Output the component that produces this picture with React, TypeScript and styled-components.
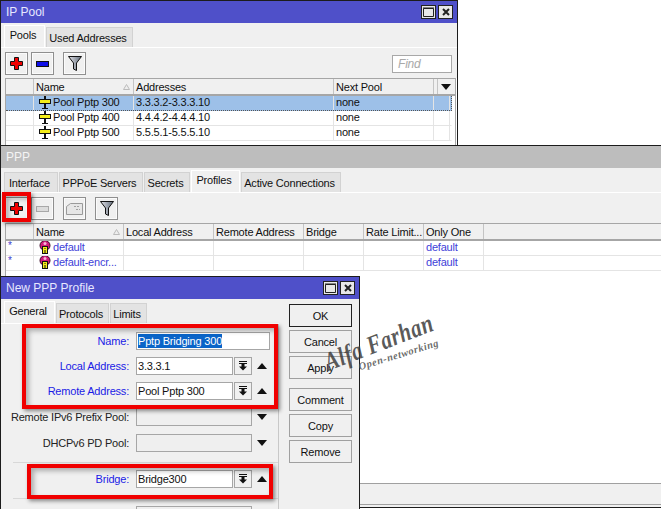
import React from 'react';
import styled, { createGlobalStyle } from 'styled-components';

const GlobalStyle = createGlobalStyle`
  html, body {
    margin: 0;
    padding: 0;
    background: #fff;
  }
  body {
    font-family: "Liberation Sans", Arial, sans-serif;
    font-size: 11px;
    letter-spacing: -0.2px;
    color: #111;
  }
`;

const Desktop = styled.div`
  position: relative;
  width: 661px;
  height: 509px;
  overflow: hidden;
  background: #fff;
`;

const Win = styled.div<{ $x: number; $y: number; $w: number; $h: number }>`
  position: absolute;
  left: ${(p) => p.$x}px;
  top: ${(p) => p.$y}px;
  width: ${(p) => p.$w}px;
  height: ${(p) => p.$h}px;
  box-sizing: border-box;
  display: flex;
  flex-direction: column;
  background: #f0f0f0;
  border: 1px solid #1c1c1c;
`;

const TitleBar = styled.div<{ $active?: boolean }>`
  flex: none;
  height: 22px;
  display: flex;
  align-items: center;
  justify-content: space-between;
  padding: 0 4px 0 5px;
  background: ${(p) => (p.$active ? '#4f50c9' : '#bdbdbd')};
  color: ${(p) => (p.$active ? '#e8e8ff' : '#f4f4f4')};
  font-size: 12px;
  letter-spacing: 0;
`;

const TitleButtons = styled.div`
  display: flex;
  gap: 2px;
`;

const TitleButton = styled.div`
  width: 15px;
  height: 14px;
  display: flex;
  align-items: center;
  justify-content: center;
  box-sizing: border-box;
  background: #e8e8e8;
  border: 1px solid #222;
`;

const TabBar = styled.div`
  flex: none;
  height: 24px;
  display: flex;
  align-items: flex-end;
  gap: 1px;
  padding-left: 3px;
  border-bottom: 1px solid #fff;
`;

const Tab = styled.div<{ $w: number; $active?: boolean }>`
  width: ${(p) => p.$w}px;
  height: ${(p) => (p.$active ? 22 : 20)}px;
  box-sizing: border-box;
  display: flex;
  align-items: center;
  justify-content: center;
  white-space: nowrap;
  background: ${(p) => (p.$active ? '#f0f0f0' : '#e3e3e3')};
  border: 1px solid ${(p) => (p.$active ? '#fff' : '#d2d2d2')};
  border-bottom: 0;
  padding-bottom: ${(p) => (p.$active ? 3 : 0)}px;
  padding-right: 3px;
`;

const Toolbar = styled.div`
  flex: none;
  height: 30px;
  box-sizing: border-box;
  display: flex;
  align-items: center;
  padding: 1px 4px 0;
`;

const ToolButton = styled.div<{ $gap?: number }>`
  width: 23px;
  height: 23px;
  box-sizing: border-box;
  display: flex;
  align-items: center;
  justify-content: center;
  margin-right: ${(p) => p.$gap ?? 3}px;
  background: #f0f0f0;
  border: 1px solid #8f8f8f;
  box-shadow: inset 0 0 0 1px #fbfbfb;
`;

const FindBox = styled.div`
  margin-left: auto;
  margin-right: 1px;
  width: 60px;
  height: 18px;
  box-sizing: border-box;
  display: flex;
  align-items: center;
  padding-left: 5px;
  background: #fff;
  border: 1px solid #a8a8a8;
  color: #a9a9a9;
  font-style: italic;
  font-size: 12px;
`;

const TableArea = styled.div`
  flex: 1;
  margin-left: 4px;
  background: #fff;
  border-left: 1px solid #a6a6a6;
  overflow: hidden;
  min-height: 0;
`;

const HeadRow = styled.div`
  height: 18px;
  display: flex;
  box-sizing: border-box;
  background: #f0f0f0;
  border-top: 1px solid #a6a6a6;
  border-bottom: 2px solid #a6a6a6;
`;

const BodyRow = styled.div<{ $selected?: boolean }>`
  height: 15px;
  margin-right: 3px;
  display: flex;
  box-sizing: border-box;
  background: ${(p) => (p.$selected ? '#9dc0e8' : '#fff')};
  border-bottom: 1px ${(p) => (p.$selected ? 'dotted #555' : 'solid #e4e4e4')};
  border-right: 1px ${(p) => (p.$selected ? 'dotted #555' : 'solid #fff')};
`;

const Cell = styled.div<{ $w: number; $head?: boolean; $link?: boolean }>`
  position: relative;
  flex: none;
  width: ${(p) => p.$w}px;
  box-sizing: border-box;
  display: flex;
  align-items: center;
  padding: 0 0 ${(p) => (p.$head ? 0 : 2)}px 2px;
  white-space: nowrap;
  overflow: hidden;
  color: ${(p) => (p.$link ? '#4141d8' : '#111')};
  border-right: 1px solid ${(p) => (p.$head ? '#c4c4c4' : '#e4e4e4')};
`;

const Flag = styled.span`
  color: #3a3ad0;
  font-size: 10px;
  line-height: 10px;
  margin: -3px 0 0 0;
`;

const RowIcon = styled.svg`
  flex: none;
  margin: 0 2px 0 3px;
`;

const SortMark = styled.svg`
  position: absolute;
  right: 3px;
  top: 5px;
`;

const StretchCell = styled(Cell)`
  flex: 1;
  border-right: 0;
`;

const HeadArrow = styled.div`
  flex: none;
  width: 15px;
  margin-left: 3px;
  display: flex;
  align-items: center;
  justify-content: center;
  border-left: 1px solid #c4c4c4;
`;

const RightRule = styled.div`
  height: 100%;
  display: flex;
  flex-direction: column;
  border-right: 1px solid #a6a6a6;
  margin-right: 1px;
`;

const StatusStrip = styled.div`
  flex: none;
  height: 20px;
  background: #f0f0f0;
  border-top: 1px solid #a0a0a0;
  border-bottom: 1px solid #a0a0a0;
  margin-bottom: 2px;
`;

const DialogBody = styled.div`
  flex: 1;
  display: flex;
  min-height: 0;
`;

const DialogLeft = styled.div`
  flex: none;
  width: 278px;
  display: flex;
  flex-direction: column;
`;

const FormPanel = styled.div`
  flex: 1;
  display: flex;
  flex-direction: column;
  padding-top: 8px;
  border-right: 1px solid #c8c8c8;
`;

const FormRow = styled.div<{ $gap?: number }>`
  flex: none;
  height: 18px;
  margin-bottom: ${(p) => p.$gap ?? 8}px;
  display: flex;
  align-items: center;
`;

const Divider = styled.div`
  flex: none;
  height: 1px;
  margin: 2px 0 7px 12px;
  background: #d8d8d8;
`;

const FieldLabel = styled.div<{ $on?: boolean }>`
  flex: none;
  width: 128px;
  margin-right: 7px;
  text-align: right;
  white-space: nowrap;
  color: ${(p) => (p.$on ? '#1b1be6' : '#222')};
`;

const Field = styled.div<{ $w: number; $off?: boolean }>`
  flex: none;
  width: ${(p) => p.$w}px;
  height: 18px;
  box-sizing: border-box;
  display: flex;
  align-items: center;
  padding-left: 1px;
  white-space: nowrap;
  background: ${(p) => (p.$off ? '#efefef' : '#fff')};
  border: 1px solid #a6a6a6;
`;

const Selected = styled.span`
  background: #0a64c8;
  color: #fff;
  padding: 1px 0;
`;

const DropButton = styled.div`
  flex: none;
  width: 18px;
  height: 18px;
  margin-left: 1px;
  box-sizing: border-box;
  display: flex;
  align-items: center;
  justify-content: center;
  background: #f0f0f0;
  border: 1px solid #a6a6a6;
`;

const ArrowSlot = styled.div`
  flex: none;
  width: 10px;
  margin-left: 5px;
  display: flex;
  justify-content: center;
`;

const SideButtons = styled.div`
  flex: none;
  margin: 5px 0 0 10px;
  display: flex;
  flex-direction: column;
`;

const DialogButton = styled.div<{ $primary?: boolean; $gap?: number }>`
  width: 63px;
  height: 23px;
  box-sizing: border-box;
  display: flex;
  align-items: center;
  justify-content: center;
  margin-bottom: ${(p) => p.$gap ?? 3}px;
  background: #f0f0f0;
  border: 1px solid ${(p) => (p.$primary ? '#222' : '#a0a0a0')};
`;

const RedBox = styled.div<{ $x: number; $y: number; $w: number; $h: number }>`
  position: absolute;
  left: ${(p) => p.$x}px;
  top: ${(p) => p.$y}px;
  width: ${(p) => p.$w}px;
  height: ${(p) => p.$h}px;
  box-sizing: border-box;
  border: 4px solid #f00000;
  box-shadow: 2px 2px 4px rgba(0, 0, 0, 0.45), inset 3px 3px 5px rgba(0, 0, 0, 0.28);
`;

const Watermark = styled.div`
  position: absolute;
  left: 331px;
  top: 352px;
  transform: rotate(-21deg) scaleY(1.25);
  transform-origin: left bottom;
  color: rgba(60, 60, 60, 0.85);
  font-family: "Liberation Serif", serif;
  font-style: italic;
  font-weight: bold;
  font-size: 21px;
  line-height: 26px;
  letter-spacing: 0.5px;
  white-space: nowrap;
`;

const WatermarkSub = styled.div`
  position: absolute;
  left: 361px;
  top: 360px;
  transform: rotate(-17deg);
  transform-origin: left bottom;
  color: rgba(80, 80, 80, 0.85);
  font-family: "Liberation Serif", serif;
  font-style: italic;
  font-weight: bold;
  font-size: 10.5px;
  line-height: 14px;
  letter-spacing: 0.5px;
  white-space: nowrap;
`;

const PlusIcon = () => (
  <svg width="13" height="13" viewBox="0 0 13 13">
    <path d="M4.5.5h4v4h4v4h-4v4h-4v-4h-4v-4h4z" fill="#f00000" stroke="#111" />
  </svg>
);

const MinusIcon = ({ off }: { off?: boolean }) => (
  <svg width="13" height="6" viewBox="0 0 13 6">
    <rect x=".5" y=".5" width="12" height="5" fill={off ? '#dcdcdc' : '#1010e8'} stroke={off ? '#a8a8a8' : '#111'} />
  </svg>
);

const FilterIcon = () => (
  <svg width="14" height="17" viewBox="0 0 14 17">
    <defs>
      <linearGradient id="fg" x1="0" x2="1" y1="0" y2="0">
        <stop offset="0" stopColor="#e4e4ea" />
        <stop offset="1" stopColor="#5f6a78" />
      </linearGradient>
    </defs>
    <path d="M.5 1.5h13L8.5 8v7.5l-3-1.5V8z" fill="url(#fg)" stroke="#111" />
  </svg>
);

const CommentIcon = () => (
  <svg width="17" height="12" viewBox="0 0 17 12">
    <path d="M4.5.5h12v11H.5V3.500z" fill="#e6e6e6" stroke="#9a9a9a" />
    <path d="M8 3.500h6M10 6.500h4" stroke="#a0a0a0" strokeDasharray="2 1" />
  </svg>
);

const PoolIcon = () => (
  <RowIcon width="12" height="13" viewBox="0 0 12 13">
    <path d="M5 0h2v3h5v5H7v4h2v1H3v-1h2V8H0V3h5z" fill="#111" />
    <rect x="1" y="4" width="10" height="3" fill="#f5ee1a" />
  </RowIcon>
);

const ProfileIcon = () => (
  <RowIcon width="12" height="14" viewBox="0 0 12 14">
    <circle cx="6" cy="5.500" r="5" fill="#d0187a" stroke="#3a0826" />
    <circle cx="6" cy="3.500" r="1.500" fill="#f8b8d8" />
    <rect x="3.500" y="6.500" width="5" height="7" fill="#f5ee1a" stroke="#111" />
    <path d="M6 8v1M6 10v3" stroke="#111" />
  </RowIcon>
);

const SortIcon = () => (
  <SortMark width="7" height="6" viewBox="0 0 7 6">
    <path d="M3.500.5L6.500 5.500H.5z" fill="#eee" stroke="#bbb" />
  </SortMark>
);

const DownSmall = () => (
  <svg width="10" height="6" viewBox="0 0 10 6">
    <path d="M0 0h10L5 6z" fill="#111" />
  </svg>
);

const UpSmall = () => (
  <svg width="10" height="6" viewBox="0 0 10 6">
    <path d="M5 0l5 6H0z" fill="#111" />
  </svg>
);

const DropIcon = () => (
  <svg width="10" height="10" viewBox="0 0 10 10">
    <path d="M1 .5h8M1 2.500h8" stroke="#111" />
    <path d="M3.500 3h3v2.500H9L5 9.500 1 5.500h2.500z" fill="#111" />
  </svg>
);

const Title = ({ text, active }: { text: string; active?: boolean }) => (
  <TitleBar $active={active}>
    <span>{text}</span>
    {active && (
      <TitleButtons>
        <TitleButton>
          <svg width="11" height="10" viewBox="0 0 11 10">
            <path d="M.5 1.500h10v8H.5z" fill="none" stroke="#222" />
            <path d="M0 1h11" stroke="#222" />
          </svg>
        </TitleButton>
        <TitleButton>
          <svg width="8" height="8" viewBox="0 0 8 8">
            <path d="M1 1l6 6M7 1L1 7" stroke="#222" strokeWidth="2" />
          </svg>
        </TitleButton>
      </TitleButtons>
    )}
  </TitleBar>
);

const pools = [
  { name: 'Pool Pptp 300', range: '3.3.3.2-3.3.3.10', selected: true },
  { name: 'Pool Pptp 400', range: '4.4.4.2-4.4.4.10' },
  { name: 'Pool Pptp 500', range: '5.5.5.1-5.5.5.10' },
];

const pppColumns = [
  { title: 'Local Address', w: 90 },
  { title: 'Remote Address', w: 90 },
  { title: 'Bridge', w: 60 },
  { title: 'Rate Limit...', w: 60 },
];

const profiles = ['default', 'default-encr...'];

const IpPoolWindow = () => (
  <Win $x={0} $y={0} $w={458} $h={146}>
    <Title text="IP Pool" active />
    <TabBar>
      <Tab $w={41} $active>Pools</Tab>
      <Tab $w={87}>Used Addresses</Tab>
    </TabBar>
    <Toolbar>
      <ToolButton><PlusIcon /></ToolButton>
      <ToolButton $gap={9}><MinusIcon /></ToolButton>
      <ToolButton><FilterIcon /></ToolButton>
      <FindBox>Find</FindBox>
    </Toolbar>
    <TableArea>
      <RightRule>
        <HeadRow>
          <Cell $w={28} $head />
          <Cell $w={100} $head>Name<SortIcon /></Cell>
          <Cell $w={200} $head>Addresses</Cell>
          <Cell $w={100} $head>Next Pool</Cell>
          <HeadArrow><DownSmall /></HeadArrow>
        </HeadRow>
        {pools.map((pool) => (
          <BodyRow key={pool.name} $selected={pool.selected}>
            <Cell $w={28} />
            <Cell $w={100}><PoolIcon />{pool.name}</Cell>
            <Cell $w={200}>{pool.range}</Cell>
            <Cell $w={100}>none</Cell>
            <Cell $w={16} />
          </BodyRow>
        ))}
      </RightRule>
    </TableArea>
  </Win>
);

const PppWindow = () => (
  <Win $x={0} $y={145} $w={672} $h={363}>
    <Title text="PPP" />
    <TabBar>
      <Tab $w={54}>Interface</Tab>
      <Tab $w={84}>PPPoE Servers</Tab>
      <Tab $w={46}>Secrets</Tab>
      <Tab $w={49} $active>Profiles</Tab>
      <Tab $w={100}>Active Connections</Tab>
    </TabBar>
    <Toolbar>
      <ToolButton><PlusIcon /></ToolButton>
      <ToolButton $gap={9}><MinusIcon off /></ToolButton>
      <ToolButton $gap={9}><CommentIcon /></ToolButton>
      <ToolButton><FilterIcon /></ToolButton>
    </Toolbar>
    <TableArea>
      <HeadRow>
        <Cell $w={28} $head />
        <Cell $w={90} $head>Name<SortIcon /></Cell>
        {pppColumns.map((col) => (
          <Cell key={col.title} $w={col.w} $head>{col.title}</Cell>
        ))}
        <Cell $w={60} $head>Only One</Cell>
        <StretchCell $w={0} $head />
      </HeadRow>
      {profiles.map((name) => (
        <BodyRow key={name}>
          <Cell $w={28}><Flag>*</Flag></Cell>
          <Cell $w={90} $link><ProfileIcon />{name}</Cell>
          {pppColumns.map((col) => (
            <Cell key={col.title} $w={col.w} />
          ))}
          <Cell $w={60} $link>default</Cell>
          <StretchCell $w={0} />
        </BodyRow>
      ))}
    </TableArea>
    <StatusStrip />
  </Win>
);

const DialogWindow = () => (
  <Win $x={0} $y={276} $w={360} $h={240}>
    <Title text="New PPP Profile" active />
    <DialogBody>
      <DialogLeft>
        <TabBar>
          <Tab $w={51} $active>General</Tab>
          <Tab $w={53}>Protocols</Tab>
          <Tab $w={37}>Limits</Tab>
        </TabBar>
        <FormPanel>
          <FormRow $gap={7}>
            <FieldLabel $on>Name:</FieldLabel>
            <Field $w={134}><Selected>Pptp Bridging 300</Selected></Field>
          </FormRow>
          <FormRow $gap={7}>
            <FieldLabel $on>Local Address:</FieldLabel>
            <Field $w={97}>3.3.3.1</Field>
            <DropButton><DropIcon /></DropButton>
            <ArrowSlot><UpSmall /></ArrowSlot>
          </FormRow>
          <FormRow>
            <FieldLabel $on>Remote Address:</FieldLabel>
            <Field $w={97}>Pool Pptp 300</Field>
            <DropButton><DropIcon /></DropButton>
            <ArrowSlot><UpSmall /></ArrowSlot>
          </FormRow>
          <FormRow>
            <FieldLabel>Remote IPv6 Prefix Pool:</FieldLabel>
            <Field $w={116} $off />
            <ArrowSlot><DownSmall /></ArrowSlot>
          </FormRow>
          <FormRow>
            <FieldLabel>DHCPv6 PD Pool:</FieldLabel>
            <Field $w={116} $off />
            <ArrowSlot><DownSmall /></ArrowSlot>
          </FormRow>
          <Divider />
          <FormRow>
            <FieldLabel $on>Bridge:</FieldLabel>
            <Field $w={97}>Bridge300</Field>
            <DropButton><DropIcon /></DropButton>
            <ArrowSlot><UpSmall /></ArrowSlot>
          </FormRow>
          <Divider />
          <FormRow>
            <FieldLabel />
            <Field $w={116} $off />
          </FormRow>
        </FormPanel>
      </DialogLeft>
      <SideButtons>
        <DialogButton $primary>OK</DialogButton>
        <DialogButton>Cancel</DialogButton>
        <DialogButton $gap={9}>Apply</DialogButton>
        <DialogButton>Comment</DialogButton>
        <DialogButton>Copy</DialogButton>
        <DialogButton>Remove</DialogButton>
      </SideButtons>
    </DialogBody>
  </Win>
);

export default function App() {
  return (
    <Desktop>
      <GlobalStyle />
      <IpPoolWindow />
      <PppWindow />
      <DialogWindow />
      <RedBox $x={2} $y={192} $w={29} $h={30} />
      <RedBox $x={22} $y={324} $w={256} $h={85} />
      <RedBox $x={27} $y={464} $w={246} $h={35} />
      <Watermark>Alfa Farhan</Watermark>
      <WatermarkSub>Open-networking</WatermarkSub>
    </Desktop>
  );
}
